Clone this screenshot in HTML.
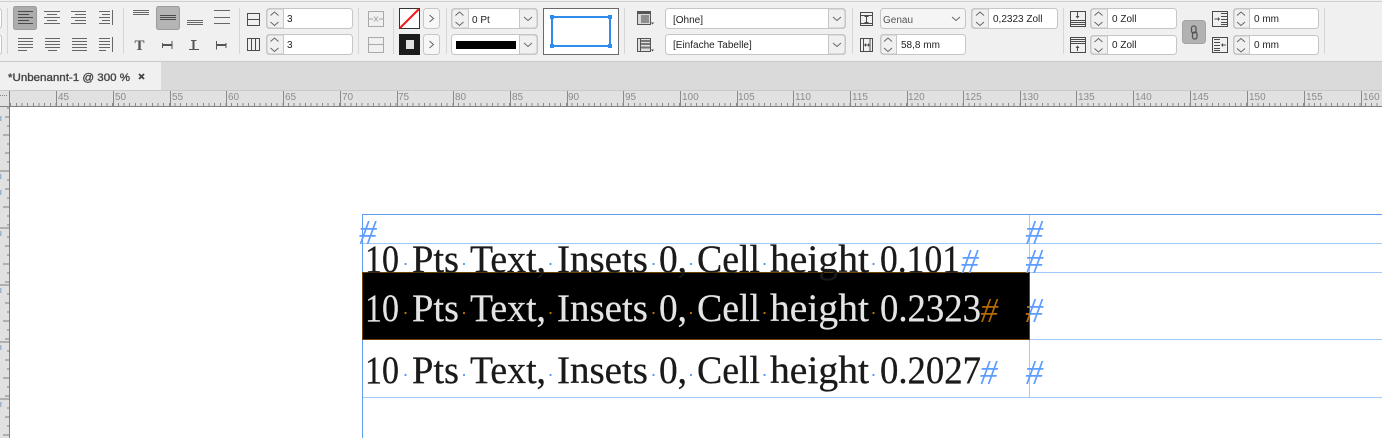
<!DOCTYPE html>
<html><head><meta charset="utf-8"><style>
html,body{margin:0;padding:0;background:#fff}
svg{display:block}
.ui{font-family:"Liberation Sans",sans-serif;font-size:10px;fill:#222}
.box{fill:#fff;stroke:#c6c6c6;stroke-width:1}
.sp{fill:#f0f0f0;stroke:#c6c6c6}
.ch{fill:none;stroke:#666;stroke-width:1}
.ic{fill:none;stroke:#666;stroke-width:1;shape-rendering:crispEdges}
.d{fill:none;stroke:#4a4a4a;stroke-width:1;shape-rendering:crispEdges}
.sep{stroke:#d6d6d6;stroke-width:1;shape-rendering:crispEdges}
.rl{font-family:"Liberation Sans",sans-serif;font-size:10px;fill:#8c8c8c}
.w{font-family:"Liberation Serif",serif;font-size:39px;fill:#1a1a1a;stroke:#1a1a1a;stroke-width:.3px}
.i{fill:#e4e4e4;stroke:#e4e4e4;stroke-width:.2px}
.h{font-family:"Liberation Serif",serif;font-style:italic;font-size:35px;fill:#5c9dff}
.o{fill:#b56a00}
.b{fill:#4f97f5}.bo{fill:#c67400}
</style></head><body>
<svg width="1382" height="438" viewBox="0 0 1382 438" xmlns="http://www.w3.org/2000/svg">
<defs>
<g id="s"><path class="ch" d="M-4 3.500l4-3.500 4 3.500M-4 10l4 3.500 4-3.500"/></g>
<g id="dn"><path class="ch" d="M-4-2l4 3.500 4-3.500"/></g>
<clipPath id="blk"><rect x="362" y="272" width="667.500" height="67.500"/></clipPath>
</defs>
<rect width="1382" height="438" fill="#fff"/>
<rect width="1382" height="62" fill="#f0f0f0"/>
<rect y="1" width="1382" height="1" fill="#cfcfcf"/>
<rect y="61" width="1382" height="1" fill="#c9c9c9"/>
<rect y="62" width="1382" height="28" fill="#dadada"/>
<rect y="62" width="161" height="28" fill="#f0f0f0"/>
<text x="8" y="81" textLength="122" lengthAdjust="spacingAndGlyphs" style="font-family:'Liberation Sans',sans-serif;font-size:11px;fill:#444;stroke:#444;stroke-width:.35px">*Unbenannt-1 @ 300 %</text>
<path d="M139 74l5 5M144 74l-5 5" stroke="#444" stroke-width="1.800" fill="none"/>

<!-- separators -->
<path class="sep" d="M7.500 8V54M123.500 8V54M239.500 8V54M358.500 8V54M393.500 8V54M446.500 8V54M624.500 8V54M852.500 8V54M1063.500 8V54M1324.500 8V54"/>
<rect x="-6" y="8.500" width="7.500" height="20" rx="3" class="box"/><rect x="-6" y="34.500" width="7.500" height="20" rx="3" class="box"/>

<!-- active buttons -->
<rect x="13.500" y="6.500" width="23" height="23" rx="2" fill="#acacac" stroke="#9c9c9c"/>
<rect x="156.500" y="6.500" width="23" height="23" rx="2" fill="#b4b4b4" stroke="#9c9c9c"/>

<!-- alignment row 1 -->
<path class="d" d="M18 11.500H33M18 14.500H29M18 17.500H33M18 20.500H29M18 23.500H33"/>
<path class="ic" d="M44 11.500H60M47 14.500H57M44 17.500H60M47 20.500H57M44 23.500H60"/>
<path class="ic" d="M71 11.500H86M75 14.500H86M71 17.500H86M75 20.500H86M71 23.500H86"/>
<path class="ic" d="M99 11.500H110M102 14.500H110M99 17.500H110M102 20.500H110M99 23.500H110M112.500 10V25"/>
<!-- alignment row 2 -->
<path class="ic" d="M18 38.500H33M18 41.500H33M18 44.500H33M18 47.500H33M18 50.500H27"/>
<path class="ic" d="M45 38.500H60M45 41.500H60M45 44.500H60M45 47.500H60M48 50.500H57"/>
<path class="ic" d="M72 38.500H87M72 41.500H87M72 44.500H87M72 47.500H87M72 50.500H87"/>
<path class="ic" d="M99 38.500H110M99 41.500H110M99 44.500H110M99 47.500H110M99 50.500H106M112.500 37V52"/>

<!-- vertical align -->
<path class="ic" d="M133 10.500H149M133 12.500H149M133 14.500H149"/>
<path class="d" d="M160 15.500H176M160 17.500H176M160 19.500H176"/>
<path class="ic" d="M187 20.500H203M187 22.500H203M187 24.500H203"/>
<path class="ic" d="M214 10.500H230M214 17.500H230M214 23.500H230"/>
<text x="134.500" y="50" style="font-family:'Liberation Serif',serif;font-weight:bold;font-size:15px;fill:#555">T</text>
<path d="M162.500 43V48M172 41V49" stroke="#555" fill="none"/><path d="M162 45H172" stroke="#555" stroke-width="2" fill="none"/>
<path d="M193.500 40V49" stroke="#555" stroke-width="2" fill="none"/><path d="M191 40.500H196.500M189 49.500H199" stroke="#555" fill="none"/>
<path d="M216.500 41V49.500M226 43V48" stroke="#555" fill="none"/><path d="M217 45H226" stroke="#555" stroke-width="2" fill="none"/>

<!-- rows / cols -->
<path class="d" d="M247.500 13.500H259.500V25.500H247.500ZM247.500 19.500H259.500"/>
<path class="d" d="M247.500 38.500H259.500V50.500H247.500ZM251.500 38.500V50.500M255.500 38.500V50.500"/>
<rect x="266.500" y="8.500" width="86" height="20" rx="3" class="box"/><path d="M283.500 9V28H270a3 3 0 0 1-3-3V12a3 3 0 0 1 3-3z" class="sp"/>
<rect x="266.500" y="34.500" width="86" height="20" rx="3" class="box"/><path d="M283.500 35V54H270a3 3 0 0 1-3-3V38a3 3 0 0 1 3-3z" class="sp"/>
<use href="#s" x="274.500" y="12"/><use href="#s" x="274.500" y="38"/>
<text class="ui" x="287" y="22">3</text><text class="ui" x="287" y="48">3</text>

<!-- merge -->
<path d="M368.500 11.500H383.500V26.500H368.500ZM368.500 19H373M379 19H383.500M374 16.500l4 5M378 16.500l-4 5" fill="none" stroke="#a8a8a8" />
<path d="M368.500 37.500H383.500V52.500H368.500ZM368.500 44.500H383.500" fill="none" stroke="#a8a8a8" shape-rendering="crispEdges"/>

<!-- fill / stroke -->
<rect x="399.500" y="8.500" width="20" height="20" fill="#fff" stroke="#333"/>
<path d="M400 28L419 9" stroke="#f01818" stroke-width="2"/>
<rect x="399" y="34" width="21" height="21" fill="#1c1c1c"/><rect x="406" y="40" width="8" height="9" fill="#e2e2e2"/>
<rect x="423.500" y="8.500" width="16" height="20" rx="3" fill="#f7f7f7" stroke="#c6c6c6"/>
<rect x="423.500" y="34.500" width="16" height="20" rx="3" fill="#f7f7f7" stroke="#c6c6c6"/>
<path class="ch" d="M429.500 15l4 3.500-4 3.500M429.500 41l4 3.500-4 3.500"/>

<!-- stroke weight -->
<rect x="451.500" y="8.500" width="86" height="20" rx="3" class="box"/>
<path d="M468.500 9V28H455a3 3 0 0 1-3-3V12a3 3 0 0 1 3-3z" class="sp"/>
<path d="M519.500 9V28H534a3 3 0 0 0 3-3V12a3 3 0 0 0-3-3z" class="sp"/>
<use href="#s" x="459.500" y="12"/><use href="#dn" x="528" y="19"/>
<text class="ui" x="472" y="23">0 Pt</text>
<rect x="451.500" y="34.500" width="86" height="20" rx="3" class="box"/>
<path d="M519.500 35V54H534a3 3 0 0 0 3-3V38a3 3 0 0 0-3-3z" class="sp"/>
<use href="#dn" x="528" y="45"/>
<rect x="456" y="41" width="60" height="8" fill="#000"/>

<!-- preview -->
<rect x="543.500" y="8.500" width="75" height="46" fill="#fff" stroke="#6a6a6a"/>
<rect x="552" y="17" width="58" height="29" fill="none" stroke="#2f8ceb" stroke-width="2"/>
<path fill="#2f8ceb" d="M550 15h4v4h-4zM608 15h4v4h-4zM550 44h4v4h-4zM608 44h4v4h-4z"/>

<!-- table styles -->
<rect x="637" y="11" width="14" height="14" fill="#555"/><rect x="638" y="14" width="12" height="10" fill="#d8d8d8"/><rect x="641" y="15" width="8" height="8" fill="#8f8f8f"/>
<path d="M651 22.500h3l-1.500 2z" fill="#444"/>
<rect x="637" y="38" width="14" height="14" fill="#555"/><rect x="638" y="39" width="12" height="12" fill="#e0e0e0"/><path d="M641 41H650M641 44H650M641 47.500H650" stroke="#777" stroke-width="2" shape-rendering="crispEdges"/><path d="M640.500 39V51" stroke="#555" shape-rendering="crispEdges"/>
<path d="M651 49.500h3l-1.500 2z" fill="#444"/>
<rect x="665.500" y="8.500" width="180" height="20" rx="3" class="box"/><path d="M828.500 9V28H842a3 3 0 0 0 3-3V12a3 3 0 0 0-3-3z" class="sp"/><use href="#dn" x="837" y="19"/>
<rect x="665.500" y="34.500" width="180" height="20" rx="3" class="box"/><path d="M828.500 35V54H842a3 3 0 0 0 3-3V38a3 3 0 0 0-3-3z" class="sp"/><use href="#dn" x="837" y="45"/>
<text class="ui" x="673" y="23">[Ohne]</text><text class="ui" x="673" y="48">[Einfache Tabelle]</text>

<!-- row height / col width -->
<path class="d" d="M860.500 12.500H872.500V25.500H860.500ZM860.500 15.500H872.500M860.500 23.500H872.500M866.500 17V22M864.500 16.500h4M864.500 22.500h4"/>
<path class="d" d="M860.500 38.500H872.500V51.500H860.500ZM863.500 38.500V51.500M870 38.500V51.500M864 45H870M865.500 43.500v3M868.500 43.500v3"/>
<rect x="880.500" y="8.500" width="85" height="20" rx="3" fill="#f5f5f5" stroke="#c6c6c6"/><use href="#dn" x="956" y="19"/>
<text class="ui" x="883" y="23" style="fill:#555">Genau</text>
<rect x="880.500" y="34.500" width="85" height="20" rx="3" class="box"/><path d="M896.500 35V54H884a3 3 0 0 1-3-3V38a3 3 0 0 1 3-3z" class="sp"/>
<use href="#s" x="888" y="38"/>
<text class="ui" x="901" y="48">58,8 mm</text>
<rect x="971.500" y="8.500" width="86" height="20" rx="3" class="box"/><path d="M988.500 9V28H975a3 3 0 0 1-3-3V12a3 3 0 0 1 3-3z" class="sp"/>
<use href="#s" x="980" y="12"/>
<text class="ui" x="993" y="22">0,2323 Zoll</text>

<!-- insets -->
<path class="d" d="M1070.500 11.500H1085.500V26.500H1070.500ZM1071 20.500H1085M1071 22.500H1085M1071 24.500H1085M1077.500 12V17"/>
<path d="M1075.500 16h4l-2 2.500z" fill="#4a4a4a"/>
<path class="d" d="M1070.500 37.500H1085.500V52.500H1070.500ZM1071 39.500H1085M1071 41.500H1085M1071 43.500H1085M1077.500 47V51"/>
<path d="M1075.500 48h4l-2-2.500z" fill="#4a4a4a"/>
<rect x="1090.500" y="8.500" width="86" height="20" rx="3" class="box"/><path d="M1107.500 9V28H1094a3 3 0 0 1-3-3V12a3 3 0 0 1 3-3z" class="sp"/>
<rect x="1090.500" y="35.500" width="86" height="19" rx="3" class="box"/><path d="M1107.500 36V54H1094a3 3 0 0 1-3-3V39a3 3 0 0 1 3-3z" class="sp"/>
<use href="#s" x="1098.500" y="12"/><use href="#s" x="1098.500" y="38.500"/>
<text class="ui" x="1112" y="22">0 Zoll</text><text class="ui" x="1112" y="48">0 Zoll</text>
<rect x="1182.500" y="20.500" width="23" height="23" rx="3" fill="#b2b2b2" stroke="#a4a4a4"/>
<rect x="1191.500" y="26" width="4.500" height="7" rx="2" fill="none" stroke="#555" stroke-width="1.300"/>
<rect x="1192.500" y="32" width="4.500" height="7" rx="2" fill="none" stroke="#555" stroke-width="1.300"/>
<path class="d" d="M1212.500 11.500H1227.500V26.500H1212.500ZM1221 13.500H1227M1221 16.500H1227M1221 19.500H1227M1221 22.500H1227M1221 24.500H1227M1214.500 19H1218"/>
<path d="M1218 17l2 2-2 2z" fill="#4a4a4a"/>
<path class="d" d="M1212.500 37.500H1227.500V52.500H1212.500ZM1214 39.500H1220M1214 42.500H1220M1214 45.500H1220M1214 48.500H1220M1214 50.500H1220M1223 45H1226"/>
<path d="M1223 43l-2 2 2 2z" fill="#4a4a4a"/>
<rect x="1233.500" y="8.500" width="85" height="20" rx="3" class="box"/><path d="M1249.500 9V28H1237a3 3 0 0 1-3-3V12a3 3 0 0 1 3-3z" class="sp"/>
<rect x="1233.500" y="35.500" width="85" height="19" rx="3" class="box"/><path d="M1249.500 36V54H1237a3 3 0 0 1-3-3V39a3 3 0 0 1 3-3z" class="sp"/>
<use href="#s" x="1241" y="12"/><use href="#s" x="1241" y="38.500"/>
<text class="ui" x="1254" y="22">0 mm</text><text class="ui" x="1254" y="48">0 mm</text>

<!-- rulers -->
<rect y="90" width="1382" height="16" fill="#e1e1e1"/>
<rect y="90" width="1382" height="1" fill="#c9c9c9"/>
<rect x="0" y="106" width="10" height="332" fill="#e1e1e1"/>
<rect x="0" y="106" width="1382" height="1" fill="#808080"/>
<rect x="9" y="91" width="1" height="347" fill="#808080"/>
<path d="M0 95.500H8" stroke="#888" stroke-dasharray="1 1" shape-rendering="crispEdges"/>
<path d="M10.100 104.500H1382" stroke="#8a8a8a" stroke-width="3" stroke-dasharray="1 4.670" fill="none" shape-rendering="crispEdges"/>
<path stroke="#8a8a8a" fill="none" shape-rendering="crispEdges" d="M56.500 91V106M113.500 91V106M170.500 91V106M226.500 91V106M283.500 91V106M340.500 91V106M397.500 91V106M453.500 91V106M510.500 91V106M567.500 91V106M623.500 91V106M680.500 91V106M737.500 91V106M793.500 91V106M850.500 91V106M907.500 91V106M963.500 91V106M1020.500 91V106M1076.500 91V106M1133.500 91V106M1190.500 91V106M1247.500 91V106M1304.500 91V106M1361.500 91V106"/>
<g class="rl">
<text x="58" y="100">45</text><text x="115" y="100">50</text><text x="172" y="100">55</text><text x="228" y="100">60</text><text x="285" y="100">65</text><text x="342" y="100">70</text><text x="398" y="100">75</text><text x="455" y="100">80</text><text x="512" y="100">85</text><text x="568" y="100">90</text><text x="625" y="100">95</text><text x="682" y="100">100</text><text x="738" y="100">105</text><text x="795" y="100">110</text><text x="852" y="100">115</text><text x="908" y="100">120</text><text x="965" y="100">125</text><text x="1022" y="100">130</text><text x="1078" y="100">135</text><text x="1135" y="100">140</text><text x="1192" y="100">145</text><text x="1249" y="100">150</text><text x="1306" y="100">155</text><text x="1363" y="100">160</text>
</g>
<path d="M9 108H7M9 117H5M9 126H7M9 135H3M9 144H7M9 153H5M9 162H7M9 171H0M9 180H7M9 189H5M9 198H7M9 207H3M9 216H7M9 225H7M9 228H0M9 237H7M9 246H5M9 255H7M9 264H3M9 273H7M9 282H5M9 285H0M9 294H7M9 303H5M9 312H7M9 321H3M9 330H7M9 339H5M9 342H0M9 351H7M9 360H5M9 369H7M9 378H3M9 387H7M9 396H5M9 399H0M9 408H7M9 417H5M9 426H7M9 435H3" stroke="#808080" fill="none" shape-rendering="crispEdges"/>
<path d="M0 116h1.500v5H0zM0 174h1.500v5H0zM0 190h1.500v5H0zM0 231h1.500v5H0zM0 288h1.500v5H0zM0 345h1.500v5H0zM0 402h1.500v5H0z" fill="#9db4cc"/>

<!-- table -->
<rect x="362" y="272" width="667.500" height="67.500" fill="#000"/>
<path d="M362.500 214.500H1382" stroke="#5f9ff2" fill="none" shape-rendering="crispEdges"/>
<path d="M362.500 214V272M362.500 340V438" stroke="#5f9ff2" fill="none" shape-rendering="crispEdges"/>
<path d="M363 243.500H1382M1030 272.500H1382M1030 339.500H1382M363 397.500H1382M1029.500 215V272M1029.500 340V398" stroke="#a3c8fb" fill="none" shape-rendering="crispEdges"/>
<path d="M362.500 272.500H1029.500V339.500H362.500Z" stroke="#6e4200" fill="none" shape-rendering="crispEdges"/>

<text class="h" x="359" y="244">#</text>
<text class="h" x="1025.500" y="244">#</text>
<text class="h" x="1025.500" y="273">#</text>
<text class="h" x="1025.500" y="322">#</text>
<text class="h o" x="1025.500" y="322" clip-path="url(#blk)">#</text>
<text class="h" x="1025.500" y="384">#</text>
<text class="h" x="961" y="273">#</text>
<text class="h o" x="980.500" y="322">#</text>
<text class="h" x="980" y="384">#</text>

<!-- row 1 -->
<g class="w">
<text x="365" y="272" textLength="34" lengthAdjust="spacingAndGlyphs">10</text><text x="412" y="272" textLength="47" lengthAdjust="spacingAndGlyphs">Pts</text><text x="470" y="272" textLength="76" lengthAdjust="spacingAndGlyphs">Text,</text><text x="557" y="272" textLength="91" lengthAdjust="spacingAndGlyphs">Insets</text><text x="659" y="272" textLength="28" lengthAdjust="spacingAndGlyphs">0,</text><text x="697" y="272" textLength="63" lengthAdjust="spacingAndGlyphs">Cell</text><text x="770" y="272" textLength="99" lengthAdjust="spacingAndGlyphs">height</text><text x="880" y="272" textLength="80" lengthAdjust="spacingAndGlyphs">0.101</text>
</g>
<g class="b"><circle cx="405.500" cy="264" r="1.100"/><circle cx="464" cy="264" r="1.100"/><circle cx="550.500" cy="264" r="1.100"/><circle cx="653.500" cy="264" r="1.100"/><circle cx="691" cy="264" r="1.100"/><circle cx="764.500" cy="264" r="1.100"/><circle cx="873.500" cy="264" r="1.100"/></g>
<!-- row 2 -->
<g class="w i">
<text x="365" y="321" textLength="34" lengthAdjust="spacingAndGlyphs">10</text><text x="412" y="321" textLength="47" lengthAdjust="spacingAndGlyphs">Pts</text><text x="470" y="321" textLength="76" lengthAdjust="spacingAndGlyphs">Text,</text><text x="557" y="321" textLength="91" lengthAdjust="spacingAndGlyphs">Insets</text><text x="659" y="321" textLength="28" lengthAdjust="spacingAndGlyphs">0,</text><text x="697" y="321" textLength="63" lengthAdjust="spacingAndGlyphs">Cell</text><text x="770" y="321" textLength="99" lengthAdjust="spacingAndGlyphs">height</text><text x="880" y="321" textLength="101" lengthAdjust="spacingAndGlyphs">0.2323</text>
</g>
<g class="bo"><circle cx="405.500" cy="313" r="1.100"/><circle cx="464" cy="313" r="1.100"/><circle cx="550.500" cy="313" r="1.100"/><circle cx="653.500" cy="313" r="1.100"/><circle cx="691" cy="313" r="1.100"/><circle cx="764.500" cy="313" r="1.100"/><circle cx="873.500" cy="313" r="1.100"/></g>
<!-- row 3 -->
<g class="w">
<text x="365" y="383" textLength="34" lengthAdjust="spacingAndGlyphs">10</text><text x="412" y="383" textLength="47" lengthAdjust="spacingAndGlyphs">Pts</text><text x="470" y="383" textLength="76" lengthAdjust="spacingAndGlyphs">Text,</text><text x="557" y="383" textLength="91" lengthAdjust="spacingAndGlyphs">Insets</text><text x="659" y="383" textLength="28" lengthAdjust="spacingAndGlyphs">0,</text><text x="697" y="383" textLength="63" lengthAdjust="spacingAndGlyphs">Cell</text><text x="770" y="383" textLength="99" lengthAdjust="spacingAndGlyphs">height</text><text x="880" y="383" textLength="101" lengthAdjust="spacingAndGlyphs">0.2027</text>
</g>
<g class="b"><circle cx="405.500" cy="375" r="1.100"/><circle cx="464" cy="375" r="1.100"/><circle cx="550.500" cy="375" r="1.100"/><circle cx="653.500" cy="375" r="1.100"/><circle cx="691" cy="375" r="1.100"/><circle cx="764.500" cy="375" r="1.100"/><circle cx="873.500" cy="375" r="1.100"/></g>
</svg>
</body></html>
